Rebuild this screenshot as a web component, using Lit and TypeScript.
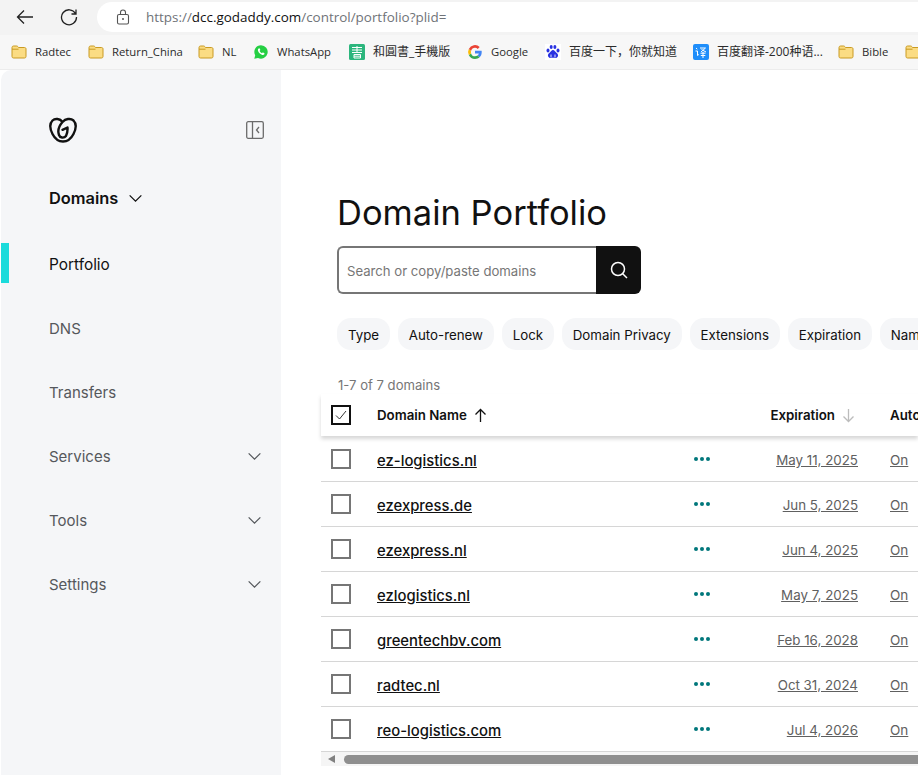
import { LitElement, html, css } from "lit";
import { customElement } from "lit/decorators.js";

const folder = html`<svg class="bmi" viewBox="0 0 16 16"><path d="M1 3.600C1 2.700 1.600 2 2.500 2h3.200c.5 0 .8.200 1.100.6l.7.900h6c.9 0 1.500.6 1.500 1.500v7.500c0 .9-.6 1.500-1.500 1.500h-11C1.600 14 1 13.400 1 12.500z" fill="#fbdc83" stroke="#c99a22" stroke-width="1"/><path d="M1 5.200h6.500" stroke="#c99a22" fill="none"/></svg>`;
const whatsapp = html`<svg class="bmi" viewBox="0 0 16 16"><path d="M8 1.200a6.700 6.700 0 0 0-5.800 10L1.300 14.800l3.700-.9A6.700 6.700 0 1 0 8 1.200z" fill="#25cf43"/><path d="M5.700 4.500c-.8.500-1 1.500-.6 2.600.6 1.600 2 3 3.700 3.700 1.100.4 2 .2 2.600-.6.3-.4.200-.8-.1-1l-1.100-.6c-.3-.2-.6-.1-.8.200l-.4.400c-1.100-.4-2-1.300-2.400-2.400l.4-.4c.3-.2.400-.5.200-.8l-.6-1.100c-.2-.3-.5-.4-.9-.1z" fill="#fff"/></svg>`;
const shu = html`<svg class="bmi" viewBox="0 0 16 16"><rect width="16" height="16" rx="1.500" fill="#2cb67d"/><path d="M3 3.500h10M3 6h10M3 8.500h10M8 2v6.500M5 10.500h6.500v3.500H5zM5 12.200h6.500" stroke="#fff" stroke-width="1" fill="none"/></svg>`;
const google = html`<svg class="bmi" viewBox="0 0 16 16"><path d="M14.700 8.200c0-.5 0-1-.1-1.400H8v2.700h3.800a3.200 3.200 0 0 1-1.400 2.100l2.200 1.700c1.300-1.200 2.100-3 2.100-5.100z" fill="#4285f4"/><path d="M8 15c1.900 0 3.400-.6 4.600-1.700l-2.200-1.700c-.6.400-1.400.7-2.400.7a4.200 4.200 0 0 1-3.900-2.900L1.800 11.100A7 7 0 0 0 8 15z" fill="#34a853"/><path d="M4.100 9.400a4.200 4.200 0 0 1 0-2.700L1.800 4.900a7 7 0 0 0 0 6.200z" fill="#fbbc05"/><path d="M8 3.800c1 0 2 .4 2.700 1.100l2-2A7 7 0 0 0 1.800 4.900l2.300 1.800A4.200 4.200 0 0 1 8 3.800z" fill="#ea4335"/></svg>`;
const baidu = html`<svg class="bmi" viewBox="0 0 16 16"><rect width="16" height="16" fill="#fff"/><g fill="#2932e1"><ellipse cx="3" cy="6.500" rx="1.500" ry="2"/><ellipse cx="6.200" cy="3" rx="1.500" ry="2"/><ellipse cx="9.900" cy="3" rx="1.500" ry="2"/><ellipse cx="13" cy="6.500" rx="1.500" ry="2"/><path d="M8 6c-1.500 0-2 1.500-3.400 2.700-1.400 1.100-2 2.200-1.500 3.500.5 1.400 1.800 2 3 1.700 1.200-.2 2.600-.2 3.800 0 1.200.3 2.500-.3 3-1.700.5-1.300-.1-2.400-1.500-3.500C10 7.500 9.500 6 8 6z"/></g><path d="M6 10.500v3M10 10.500v3" stroke="#fff" stroke-width=".9"/></svg>`;
const fanyi = html`<svg class="bmi" viewBox="0 0 16 16"><rect width="16" height="16" rx="2" fill="#1f8efa"/><path d="M3 4l1.300 1.200M2.500 7h2v4.500l1.300-1M7 4h5.500L8 8M8.500 5.500L13 8M7.500 9.200h5M10 8v6M7.800 11.500h4.500" stroke="#fff" stroke-width="1" fill="none"/></svg>`;

const chevron = html`<svg class="chev" viewBox="0 0 16 10"><path d="M1.500 1.500L8 8l6.500-6.500" fill="none" stroke="currentColor" stroke-width="1.400"/></svg>`;

const bookmarks = [
  { i: folder, t: "Radtec", w: 77 },
  { i: folder, t: "Return_China", w: 110 },
  { i: folder, t: "NL", w: 55 },
  { i: whatsapp, t: "WhatsApp", w: 96 },
  { i: shu, t: "和圓書_手機版", w: 118, cjk: true },
  { i: google, t: "Google", w: 78 },
  { i: baidu, t: "百度一下，你就知道", w: 148, cjk: true },
  { i: fanyi, t: "百度翻译-200种语...", w: 145, cjk: true },
  { i: folder, t: "Bible", w: 67 },
  { i: folder, t: "", w: 20 },
];

const rows = [
  ["ez-logistics.nl", "May 11, 2025"],
  ["ezexpress.de", "Jun 5, 2025"],
  ["ezexpress.nl", "Jun 4, 2025"],
  ["ezlogistics.nl", "May 7, 2025"],
  ["greentechbv.com", "Feb 16, 2028"],
  ["radtec.nl", "Oct 31, 2024"],
  ["reo-logistics.com", "Jul 4, 2026"],
];

const chips = ["Type", "Auto-renew", "Lock", "Domain Privacy", "Extensions", "Expiration", "Name"];

@customElement("app-root")
export class AppRoot extends LitElement {
  static styles = css`
    :host {
      display: flex;
      flex-direction: column;
      width: 918px;
      height: 775px;
      overflow: hidden;
      background: #fff;
      font-family: Inter, "Noto Sans CJK SC", sans-serif;
      color: #111;
    }
    .toolbar {
      height: 35px;
      flex: none;
      box-sizing: border-box;
      padding: 2px 0 3px 0;
      background: #f3f3f3;
      display: flex;
      align-items: center;
    }
    .nav {
      width: 97px;
      flex: none;
      display: flex;
      align-items: center;
      padding-left: 16px;
      box-sizing: border-box;
      gap: 26px;
    }
    .nav svg { width: 18px; height: 18px; flex: none; }
    .url {
      flex: 1;
      height: 30px;
      background: #fff;
      border-radius: 15px 0 0 15px;
      display: flex;
      align-items: center;
      padding-left: 19px;
      gap: 16px;
      font-family: "Open Sans", sans-serif;
      font-size: 13.45px;
      color: #6f7378;
    }
    .url svg { width: 14px; height: 16px; flex: none; }
    .url b { font-weight: 400; color: #111; }
    .bookmarks {
      height: 35px;
      flex: none;
      box-sizing: border-box;
      background: #f7f7f7;
      border-bottom: 1px solid #ececec;
      padding-left: 11px;
      display: flex;
      align-items: center;
      font-family: "Open Sans", "Noto Sans CJK SC", sans-serif;
      font-size: 11.3px;
      color: #2b2b2b;
      white-space: nowrap;
    }
    .bm { display: flex; align-items: center; gap: 8px; flex: none; }
    .bm span { padding-bottom: 2px; }
    .bm span.cjk { font-size: 12px; }
    .bmi { width: 16px; height: 16px; flex: none; }
    .body { flex: 1; display: flex; min-height: 0; padding-left: 1px; }
    .side {
      width: 280px;
      flex: none;
      box-sizing: border-box;
      background: #f5f6f8;
      border-top-left-radius: 10px;
      padding-top: 47px;
      font-size: 15px;
      color: #55585c;
    }
    .brand {
      display: flex;
      justify-content: space-between;
      align-items: center;
      padding: 0 17px 0 48px;
      height: 26px;
    }
    .brand svg:first-child { width: 28px; height: 26px; }
    .brand svg:last-child { width: 18px; height: 18px; }
    .section {
      display: flex;
      align-items: center;
      gap: 10px;
      margin-top: 42px;
      padding-left: 48px;
      height: 26px;
      font-size: 16.4px;
      font-weight: 600;
      color: #111;
    }
    .section .chev { width: 15px; height: 9px; }
    .items { margin-top: 21px; }
    .item {
      height: 64px;
      display: flex;
      align-items: center;
      justify-content: space-between;
      padding: 0 19px 0 48px;
      position: relative;
    }
    .item .chev { width: 15px; height: 9px; }
    .item.on { color: #111; font-size: 15.4px; }
    .item.on::before {
      content: "";
      position: absolute;
      left: 0;
      top: 11px;
      width: 8px;
      height: 40px;
      background: #1bdbdb;
    }
    .main { flex: 1; min-width: 0; overflow: hidden; padding-top: 121px; }
    .pad { padding-left: 56px; }
    h1 {
      margin: 0;
      font-size: 34.5px;
      line-height: 44px;
      font-weight: 400;
      color: #111;
      white-space: nowrap;
    }
    .search { display: flex; margin-top: 11px; height: 48px; width: 304px; }
    .field {
      flex: 1;
      box-sizing: border-box;
      border: 2px solid #767676;
      border-right: none;
      border-radius: 6px 0 0 6px;
      display: flex;
      align-items: center;
      padding: 2px 0 0 8px;
      font-size: 13.15px;
      color: #767676;
      white-space: nowrap;
    }
    .sbtn {
      width: 45px;
      background: #111;
      border-radius: 0 6px 6px 0;
      display: flex;
      align-items: center;
      justify-content: center;
    }
    .sbtn svg { width: 20px; height: 20px; }
    .chips { display: flex; gap: 7.7px; margin-top: 24px; white-space: nowrap; }
    .chip {
      flex: none;
      height: 32px;
      box-sizing: border-box;
      padding: 2px 11px 0;
      display: flex;
      align-items: center;
      background: #f5f6f8;
      border-radius: 14px;
      font-size: 13.3px;
      color: #111;
    }
    .count { margin: 26px 0 0 1px; font-size: 13.1px; line-height: 18px; color: #767676; }
    .table { margin-left: 40px; width: 597px; }
    .row {
      display: grid;
      grid-template-columns: 56px 300px 80px 101px 60px;
      height: 45px;
      box-sizing: border-box;
      align-items: center;
      border-bottom: 1px solid #d6d6d6;
      font-size: 14px;
      white-space: nowrap;
    }
    .row.head {
      height: 42px;
      border-bottom: none;
      font-weight: 600;
      font-size: 13.3px;
      box-shadow: 0 3px 4px rgba(0, 0, 0, 0.16);
      margin-bottom: 1px;
      position: relative;
    }
    .cb {
      width: 20px;
      height: 20px;
      box-sizing: border-box;
      border: 2px solid #767676;
      margin-left: 10px;
      display: flex;
    }
    .head .cb { border-color: #111; }
    .cb svg { width: 16px; height: 16px; }
    .sort { display: flex; align-items: center; gap: 7px; }
    .sort svg { width: 13px; height: 15px; flex: none; }
    .cell { padding-top: 4px; }
    .name { color: #111; text-decoration: underline; font-weight: 500; font-size: 14.85px; }
    .dots { display: flex; gap: 2px; padding-left: 17px; }
    .dots i { width: 4px; height: 4px; border-radius: 50%; background: #00777b; }
    .exp { text-align: right; color: #606060; text-decoration: underline; font-size: 13.35px; padding-top: 2px; }
    .exph { justify-content: flex-end; padding-right: 3px; }
    .on-cell { padding: 2px 0 0 32px; color: #606060; text-decoration: underline; font-size: 13.5px; }
    .auto { padding-left: 32px; overflow: hidden; }
    .scroll { display: flex; align-items: center; height: 14px; gap: 9px; background: #f5f5f5; padding-left: 7px; }
    .arrow { width: 0; height: 0; border: 4px solid transparent; border-right: 7px solid #808080; border-left: none; flex: none; }
    .thumb { flex: 1; height: 9px; background: #8f8f8f; border-radius: 5px 0 0 5px; }
  `;

  render() {
    return html`
      <div class="toolbar">
        <div class="nav">
          <svg viewBox="0 0 18 18"><path d="M17 9H1.500M8 2.500L1.500 9 8 15.500" fill="none" stroke="#222" stroke-width="1.300"/></svg>
          <svg viewBox="0 0 18 18"><path d="M15.500 5.500A7.500 7.500 0 1 0 16.500 9M16 1.500v4.500h-4.500" fill="none" stroke="#222" stroke-width="1.300"/></svg>
        </div>
        <div class="url">
          <svg viewBox="0 0 14 16"><rect x="1.500" y="5.500" width="11" height="9.500" rx="1.500" fill="none" stroke="#555" stroke-width="1.100"/><path d="M4.500 5.500V3.500a2.500 2.500 0 0 1 5 0v2" fill="none" stroke="#555" stroke-width="1.100"/><circle cx="7" cy="10" r="1" fill="#555"/></svg>
          <span>https://<b>dcc.godaddy.com</b>/control/portfolio?plid=</span>
        </div>
      </div>
      <div class="bookmarks">
        ${bookmarks.map(
          (b) => html`<div class="bm" style="width:${b.w}px">${b.i}<span class=${b.cjk ? "cjk" : ""}>${b.t}</span></div>`
        )}
      </div>
      <div class="body">
        <aside class="side">
          <div class="brand">
            <svg viewBox="0 0 28 26">
              <path d="M13.500 5C11 1.500 6 1 3.500 3.500 .5 6.500 1 12 3.500 17c2.200 4.300 6 7.500 10.500 7.500 4.500 0 8.300-3.200 10.500-7.500C27 12 27.500 6.500 24.500 3.500 21.500 .8 16.500 1.800 13.500 5 10 9 8.500 14 10 18 11 21 15 21.500 17 19 18.500 16 18.700 13 18.500 10.500L13.500 12.800" fill="none" stroke="#111" stroke-width="2.400" stroke-linecap="round" stroke-linejoin="round"/>
            </svg>
            <svg viewBox="0 0 18 18"><rect x=".7" y=".7" width="16.600" height="16.600" rx="1.500" fill="none" stroke="#6b6b6b" stroke-width="1.300"/><path d="M6.500 1v16" stroke="#6b6b6b" stroke-width="1.300"/><path d="M13 6L10.500 9l2.500 3" fill="none" stroke="#6b6b6b" stroke-width="1.300"/></svg>
          </div>
          <div class="section">Domains ${chevron}</div>
          <div class="items">
            <div class="item on">Portfolio</div>
            <div class="item">DNS</div>
            <div class="item">Transfers</div>
            <div class="item">Services ${chevron}</div>
            <div class="item">Tools ${chevron}</div>
            <div class="item">Settings ${chevron}</div>
          </div>
        </aside>
        <main class="main">
          <div class="pad">
            <h1>Domain Portfolio</h1>
            <div class="search">
              <div class="field">Search or copy/paste domains</div>
              <div class="sbtn">
                <svg viewBox="0 0 20 20"><circle cx="9" cy="9" r="6.500" fill="none" stroke="#fff" stroke-width="1.500"/><path d="M13.700 13.700L18 18" stroke="#fff" stroke-width="1.500"/></svg>
              </div>
            </div>
            <div class="chips">${chips.map((c) => html`<div class="chip">${c}</div>`)}</div>
            <div class="count">1-7 of 7 domains</div>
          </div>
          <div class="table">
            <div class="row head">
              <div class="cb"><svg viewBox="0 0 16 16"><path d="M3 8.500L6.500 12 13 4" fill="none" stroke="#333" stroke-width="1"/></svg></div>
              <div class="sort">Domain Name <svg viewBox="0 0 13 15"><path d="M6.500 14V1.500M1.500 6.500l5-5 5 5" fill="none" stroke="#111" stroke-width="1.300"/></svg></div>
              <div></div>
              <div class="sort exph">Expiration <svg viewBox="0 0 13 15"><path d="M6.500 1v12.500M1.500 8.500l5 5 5-5" fill="none" stroke="#bcbcbc" stroke-width="1.300"/></svg></div>
              <div class="auto">Auto</div>
            </div>
            ${rows.map(
              (r) => html`<div class="row">
                <div class="cb"></div>
                <div class="cell"><span class="name">${r[0]}</span></div>
                <div class="dots"><i></i><i></i><i></i></div>
                <div class="exp">${r[1]}</div>
                <div class="on-cell">On</div>
              </div>`
            )}
            <div class="scroll"><span class="arrow"></span><span class="thumb"></span></div>
          </div>
        </main>
      </div>
    `;
  }
}
